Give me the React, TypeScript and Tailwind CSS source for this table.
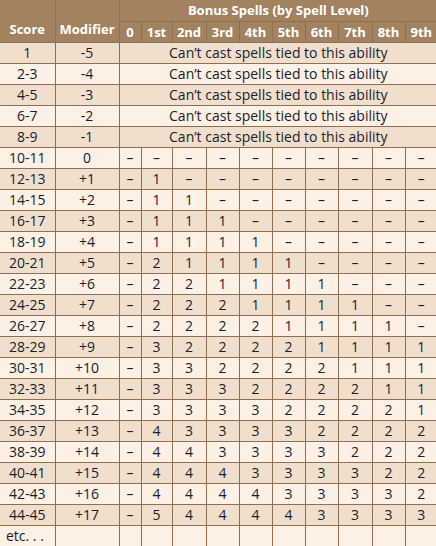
import React from "react";

const widths = [55, 64, 22, 31, 34, 33, 33, 33, 33, 34, 33, 32];
const levels = ["0", "1st", "2nd", "3rd", "4th", "5th", "6th", "7th", "8th", "9th"];

const noCast: [string, string][] = [
  ["1", "-5"],
  ["2-3", "-4"],
  ["4-5", "-3"],
  ["6-7", "-2"],
  ["8-9", "-1"],
];

// spell slots per level, "0" shown as a dash
const rows: [string, string, string][] = [
  ["10-11", "0", "0000000000"],
  ["12-13", "+1", "0100000000"],
  ["14-15", "+2", "0110000000"],
  ["16-17", "+3", "0111000000"],
  ["18-19", "+4", "0111100000"],
  ["20-21", "+5", "0211110000"],
  ["22-23", "+6", "0221111000"],
  ["24-25", "+7", "0222111100"],
  ["26-27", "+8", "0222211110"],
  ["28-29", "+9", "0322221111"],
  ["30-31", "+10", "0332222111"],
  ["32-33", "+11", "0333222211"],
  ["34-35", "+12", "0333322221"],
  ["36-37", "+13", "0433332222"],
  ["38-39", "+14", "0443333222"],
  ["40-41", "+15", "0444333322"],
  ["42-43", "+16", "0444433332"],
  ["44-45", "+17", "0544443333"],
];

const cell = "border border-[#8f6f4f] h-[21px] p-0 text-center";
const th = "border border-[#8f6f4f] p-0 text-center font-bold text-white text-[13px]";

export default function App() {
  return (
    <div className="w-[436px] h-[546px] overflow-hidden bg-[#fdf1e5] font-['Open_Sans',sans-serif] text-[14px] leading-[20px] text-[#1c1c2a]">
      <table className="w-[436px] table-fixed border-collapse border-hidden">
        <colgroup>
          {widths.map((w, i) => (
            <col key={i} style={{ width: w }} />
          ))}
        </colgroup>
        <thead className="bg-[#a3825f]">
          <tr className="h-[21px]">
            <th rowSpan={2} className={`${th} align-bottom pb-[3px]`}>Score</th>
            <th rowSpan={2} className={`${th} align-bottom pb-[3px]`}>Modifier</th>
            <th colSpan={10} className={th}>Bonus Spells (by Spell Level)</th>
          </tr>
          <tr className="h-[21px]">
            {levels.map((l) => (
              <th key={l} className={th}>{l}</th>
            ))}
          </tr>
        </thead>
        <tbody>
          {noCast.map(([s, m], i) => (
            <tr key={s} className={i % 2 === 0 ? "bg-[#f0dfcd]" : "bg-[#fdf1e5]"}>
              <td className={cell}>{s}</td>
              <td className={cell}>{m}</td>
              <td colSpan={10} className={cell}>Can’t cast spells tied to this ability</td>
            </tr>
          ))}
          {rows.map(([s, m, v], i) => (
            <tr key={s} className={(i + 5) % 2 === 0 ? "bg-[#f0dfcd]" : "bg-[#fdf1e5]"}>
              <td className={cell}>{s}</td>
              <td className={cell}>{m}</td>
              {v.split("").map((c, j) => (
                <td key={j} className={cell}>{c === "0" ? "–" : c}</td>
              ))}
            </tr>
          ))}
          <tr className="bg-[#fdf1e5]">
            <td className={`${cell} text-left pl-[6px]`}>etc. . .</td>
            {Array.from({ length: 11 }).map((_, j) => (
              <td key={j} className={cell}></td>
            ))}
          </tr>
        </tbody>
      </table>
    </div>
  );
}
